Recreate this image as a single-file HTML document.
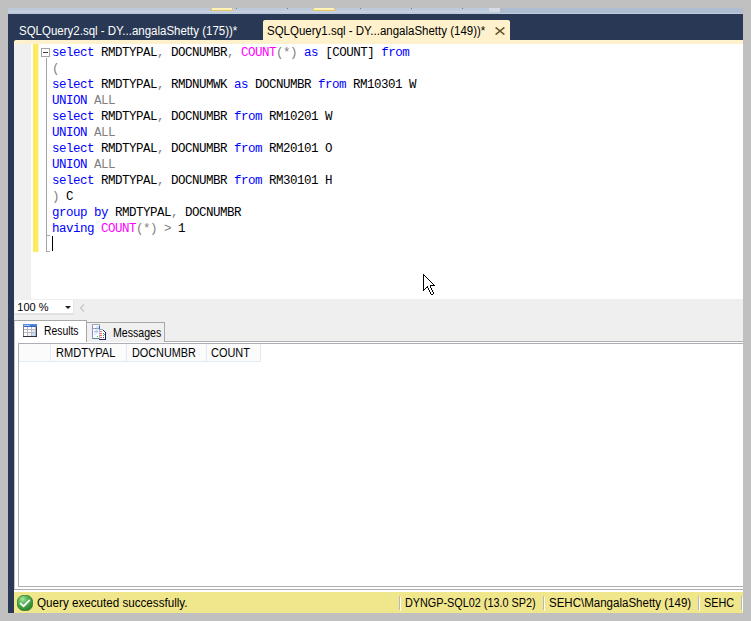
<!DOCTYPE html>
<html><head><meta charset="utf-8">
<style>
*{margin:0;padding:0;box-sizing:border-box}
html,body{width:751px;height:621px;overflow:hidden;background:#c0c0c0;position:relative}
.a{position:absolute}
.ui{position:absolute;font-family:"Liberation Sans",sans-serif;font-size:12px;line-height:14px;white-space:nowrap;transform-origin:0 0}
.cl{position:absolute;left:52px;margin-top:1px;height:16px;font-family:"Liberation Mono",monospace;font-size:12.5px;letter-spacing:-0.5px;line-height:16px;white-space:pre;color:#000}
.kw{color:#0000ff}.op{color:#808080}.fn{color:#ff00ff}
</style></head><body>
<!-- top light blue strip -->
<div class="a" style="left:8px;top:8px;width:735px;height:6px;background:#afbdd1"></div>
<div class="a" style="left:8px;top:13px;width:735px;height:1px;background:#bfcadb"></div>
<div class="a" style="left:8px;top:8px;width:492px;height:6px;background:#bccadb"></div>
<div class="a" style="left:8px;top:11px;width:492px;height:1px;background:#cad4e3"></div>
<div class="a" style="left:489px;top:8px;width:11px;height:4px;background:#d5dce8;border-radius:0 0 1px 3px"></div>
<div class="a" style="left:211px;top:8px;width:22px;height:3px;background:#fff3b6;border:1px solid #e5c365;border-top:0"></div>
<div class="a" style="left:313px;top:8px;width:22px;height:3px;background:#fff3b6;border:1px solid #e5c365;border-top:0"></div>
<div class="a" style="left:236px;top:8px;width:1px;height:1px;background:#707a88"></div>
<div class="a" style="left:287px;top:8px;width:1px;height:1px;background:#707a88"></div>
<div class="a" style="left:360px;top:8px;width:1px;height:1px;background:#707a88"></div>
<div class="a" style="left:411px;top:8px;width:1px;height:1px;background:#707a88"></div>
<div class="a" style="left:462px;top:8px;width:1px;height:1px;background:#707a88"></div>
<!-- navy frame -->
<div class="a" style="left:8px;top:14px;width:735px;height:599px;background:#293955"></div>
<!-- inactive tab text -->
<div class="ui" id="t_tab2" style="left:18.8px;top:24px;color:#fff;transform:scaleX(0.958)">SQLQuery2.sql - DY...angalaShetty (175))*</div>
<!-- active tab -->
<div class="a" style="left:263px;top:20px;width:247px;height:24px;background:#fef1cc;border-radius:2px 2px 0 0"></div>
<div class="ui" id="t_tab1" style="left:266.7px;top:24px;color:#000;transform:scaleX(0.958)">SQLQuery1.sql - DY...angalaShetty (149))*</div>
<svg class="a" style="left:495px;top:27px" width="10" height="8" viewBox="0 0 10 8"><path d="M0.6 0.4L9.4 7.6M9.4 0.4L0.6 7.6" stroke="#62522c" stroke-width="1.5"/></svg>
<!-- yellow strip -->
<div class="a" style="left:14px;top:40px;width:729px;height:4px;background:#fef1cc;border-radius:2px 0 0 0"></div>
<!-- editor -->
<div class="a" style="left:14px;top:44px;width:729px;height:255px;background:#fff"></div>
<div class="a" style="left:14px;top:44px;width:17px;height:255px;background:#f0f0f0"></div>
<div class="a" style="left:33px;top:44px;width:5px;height:208px;background:#feea62"></div>
<div class="a" style="left:38px;top:44px;width:1px;height:208px;background:#fff6b8"></div>
<!-- fold -->
<div class="a" style="left:41px;top:48px;width:9px;height:9px;border:1px solid #a5a5a5;background:#fff"></div>
<div class="a" style="left:43px;top:52px;width:5px;height:1px;background:#404040"></div>
<div class="a" style="left:46px;top:58px;width:1px;height:194px;background:#a5a5a5"></div>
<div class="a" style="left:46px;top:235px;width:4px;height:1px;background:#a5a5a5"></div>
<div class="a" style="left:46px;top:251px;width:4px;height:1px;background:#a5a5a5"></div>
<div class="a" style="left:52px;top:236px;width:1px;height:15px;background:#000"></div>
<div class="cl" id="t_c1" style="top:44px"><span class="kw">select</span> RMDTYPAL<span class="op">,</span> DOCNUMBR<span class="op">,</span><span class="fn"> COUNT</span><span class="op">(*)</span><span class="kw"> as</span> [COUNT]<span class="kw"> from</span></div>
<div class="cl" id="t_c2" style="top:60px"><span class="op">(</span></div>
<div class="cl" id="t_c3" style="top:76px"><span class="kw">select</span> RMDTYPAL<span class="op">,</span> RMDNUMWK<span class="kw"> as</span> DOCNUMBR<span class="kw"> from</span> RM10301 W</div>
<div class="cl" id="t_c4" style="top:92px"><span class="kw">UNION</span><span class="op"> ALL</span></div>
<div class="cl" id="t_c5" style="top:108px"><span class="kw">select</span> RMDTYPAL<span class="op">,</span> DOCNUMBR<span class="kw"> from</span> RM10201 W</div>
<div class="cl" id="t_c6" style="top:124px"><span class="kw">UNION</span><span class="op"> ALL</span></div>
<div class="cl" id="t_c7" style="top:140px"><span class="kw">select</span> RMDTYPAL<span class="op">,</span> DOCNUMBR<span class="kw"> from</span> RM20101 O</div>
<div class="cl" id="t_c8" style="top:156px"><span class="kw">UNION</span><span class="op"> ALL</span></div>
<div class="cl" id="t_c9" style="top:172px"><span class="kw">select</span> RMDTYPAL<span class="op">,</span> DOCNUMBR<span class="kw"> from</span> RM30101 H</div>
<div class="cl" id="t_c10" style="top:188px"><span class="op">)</span> C</div>
<div class="cl" id="t_c11" style="top:204px"><span class="kw">group by</span> RMDTYPAL<span class="op">,</span> DOCNUMBR</div>
<div class="cl" id="t_c12" style="top:220px"><span class="kw">having</span><span class="fn"> COUNT</span><span class="op">(*) &gt;</span> 1</div>
<!-- mouse cursor -->
<svg class="a" style="left:423px;top:274px" width="12" height="21" viewBox="0 0 12 21" shape-rendering="crispEdges"><path d="M1 2h1v1h-1zM1 3h1v1h-1zM2 3h1v1h-1zM1 4h1v1h-1zM2 4h1v1h-1zM3 4h1v1h-1zM1 5h1v1h-1zM2 5h1v1h-1zM3 5h1v1h-1zM4 5h1v1h-1zM1 6h1v1h-1zM2 6h1v1h-1zM3 6h1v1h-1zM4 6h1v1h-1zM5 6h1v1h-1zM1 7h1v1h-1zM2 7h1v1h-1zM3 7h1v1h-1zM4 7h1v1h-1zM5 7h1v1h-1zM6 7h1v1h-1zM1 8h1v1h-1zM2 8h1v1h-1zM3 8h1v1h-1zM4 8h1v1h-1zM5 8h1v1h-1zM6 8h1v1h-1zM7 8h1v1h-1zM1 9h1v1h-1zM2 9h1v1h-1zM3 9h1v1h-1zM4 9h1v1h-1zM5 9h1v1h-1zM6 9h1v1h-1zM7 9h1v1h-1zM8 9h1v1h-1zM1 10h1v1h-1zM2 10h1v1h-1zM3 10h1v1h-1zM4 10h1v1h-1zM5 10h1v1h-1zM6 10h1v1h-1zM7 10h1v1h-1zM8 10h1v1h-1zM9 10h1v1h-1zM1 11h1v1h-1zM2 11h1v1h-1zM3 11h1v1h-1zM4 11h1v1h-1zM5 11h1v1h-1zM6 11h1v1h-1zM1 12h1v1h-1zM2 12h1v1h-1zM3 12h1v1h-1zM5 12h1v1h-1zM6 12h1v1h-1zM1 13h1v1h-1zM2 13h1v1h-1zM5 13h1v1h-1zM6 13h1v1h-1zM1 14h1v1h-1zM6 14h1v1h-1zM7 14h1v1h-1zM6 15h1v1h-1zM7 15h1v1h-1zM7 16h1v1h-1zM8 16h1v1h-1zM7 17h1v1h-1zM8 17h1v1h-1zM8 18h1v1h-1zM9 18h1v1h-1zM8 19h1v1h-1zM9 19h1v1h-1z" fill="#fff"/><path d="M0 0h1v1h-1zM0 1h1v1h-1zM1 1h1v1h-1zM0 2h1v1h-1zM2 2h1v1h-1zM0 3h1v1h-1zM3 3h1v1h-1zM0 4h1v1h-1zM4 4h1v1h-1zM0 5h1v1h-1zM5 5h1v1h-1zM0 6h1v1h-1zM6 6h1v1h-1zM0 7h1v1h-1zM7 7h1v1h-1zM0 8h1v1h-1zM8 8h1v1h-1zM0 9h1v1h-1zM9 9h1v1h-1zM0 10h1v1h-1zM10 10h1v1h-1zM0 11h1v1h-1zM7 11h1v1h-1zM8 11h1v1h-1zM9 11h1v1h-1zM10 11h1v1h-1zM11 11h1v1h-1zM0 12h1v1h-1zM4 12h1v1h-1zM7 12h1v1h-1zM0 13h1v1h-1zM3 13h1v1h-1zM4 13h1v1h-1zM7 13h1v1h-1zM0 14h1v1h-1zM2 14h1v1h-1zM5 14h1v1h-1zM8 14h1v1h-1zM0 15h1v1h-1zM1 15h1v1h-1zM5 15h1v1h-1zM8 15h1v1h-1zM0 16h1v1h-1zM6 16h1v1h-1zM9 16h1v1h-1zM6 17h1v1h-1zM9 17h1v1h-1zM7 18h1v1h-1zM10 18h1v1h-1zM7 19h1v1h-1zM10 19h1v1h-1zM8 20h1v1h-1zM9 20h1v1h-1z" fill="#000"/></svg>
<!-- zoom bar / tab strip -->
<div class="a" style="left:14px;top:299px;width:729px;height:42px;background:#efefef"></div>
<div class="a" style="left:14px;top:313px;width:60px;height:2px;background:#e2e2e2"></div>
<div class="a" style="left:73px;top:300px;width:1px;height:13px;background:#e6e6e6"></div>
<div class="a" style="left:14px;top:300px;width:59px;height:13px;background:#fff;border-left:1px solid #f4f4f4"></div>
<div class="ui" id="t_zoom" style="left:17.3px;top:300px;color:#000;font-size:11px;transform:scaleX(1.0)">100 %</div>
<svg class="a" style="left:65px;top:306px" width="7" height="4"><path d="M0 0h6l-3 3z" fill="#1e1e1e"/></svg>
<svg class="a" style="left:79px;top:304px" width="7" height="8"><path d="M5 0.5L1.5 4L5 7.5" stroke="#c4c4c4" stroke-width="1.2" fill="none"/></svg>
<!-- results tabs -->
<div class="a" style="left:14px;top:341px;width:729px;height:251px;background:#fff;border-top:1px solid #b0b0b0"></div>
<div class="a" style="left:86px;top:322px;width:79px;height:20px;background:#f0f0f0;border:1px solid #a8a8a8;border-bottom:0"></div>
<div class="a" style="left:14px;top:320px;width:73px;height:22px;background:#fff;border:1px solid #a8a8a8;border-left:0;border-bottom:0"></div>
<div class="a" style="left:14px;top:321px;width:1px;height:269px;background:#c6c3bf"></div>
<svg class="a" style="left:23px;top:324px" width="14" height="13" viewBox="0 0 14 13" shape-rendering="crispEdges">
<rect x="0" y="0" width="14" height="13" fill="#808088"/>
<rect x="0" y="0" width="14" height="1" fill="#5a8ede"/>
<rect x="1" y="1" width="12" height="1" fill="#3f7ade"/><rect x="1" y="1" width="6" height="1" fill="#a6c6f4"/>
<rect x="1" y="2" width="12" height="1" fill="#3066cc"/>
<rect x="1" y="3" width="12" height="9" fill="#b9b9c2"/>
<rect x="1" y="3" width="3" height="2" fill="#fff"/><rect x="5" y="3" width="3" height="2" fill="#fff"/><rect x="9" y="3" width="3" height="2" fill="#fff"/>
<rect x="1" y="6" width="3" height="2" fill="#fff"/><rect x="5" y="6" width="3" height="2" fill="#fff"/><rect x="9" y="6" width="3" height="2" fill="#d8ecfc"/>
<rect x="1" y="9" width="3" height="3" fill="#fff"/><rect x="5" y="9" width="3" height="3" fill="#f0f0ff"/><rect x="9" y="9" width="3" height="3" fill="#c4dcf8"/>
<rect x="13" y="3" width="1" height="10" fill="#3c3c50"/><rect x="0" y="12" width="14" height="1" fill="#2e2e36"/>
</svg>
<div class="ui" id="t_results" style="left:43.7px;top:324px;color:#000;transform:scaleX(0.862)">Results</div>
<svg class="a" style="left:92px;top:324px" width="15" height="17" viewBox="0 0 15 17" shape-rendering="crispEdges"><rect x="0" y="0" width="1" height="1" fill="#a9a9b0"/><rect x="0" y="1" width="1" height="1" fill="#8e8ad6"/><rect x="0" y="2" width="1" height="1" fill="#8e8ad6"/><rect x="0" y="3" width="1" height="1" fill="#8e8ad6"/><rect x="0" y="4" width="1" height="1" fill="#8e8ad6"/><rect x="0" y="5" width="1" height="1" fill="#8e8ad6"/><rect x="0" y="6" width="1" height="1" fill="#8e8ad6"/><rect x="0" y="7" width="1" height="1" fill="#8e8ad6"/><rect x="0" y="8" width="1" height="1" fill="#8e8ad6"/><rect x="0" y="9" width="1" height="1" fill="#8e8ad6"/><rect x="0" y="10" width="1" height="1" fill="#8e8ad6"/><rect x="0" y="11" width="1" height="1" fill="#8e8ad6"/><rect x="0" y="12" width="1" height="1" fill="#8e8ad6"/><rect x="0" y="13" width="1" height="1" fill="#8e8ad6"/><rect x="0" y="14" width="1" height="1" fill="#8e8ad6"/><rect x="1" y="0" width="1" height="1" fill="#a9a9b0"/><rect x="1" y="1" width="1" height="1" fill="#fbfdff"/><rect x="1" y="2" width="1" height="1" fill="#fbfdff"/><rect x="1" y="3" width="1" height="1" fill="#fbfdff"/><rect x="1" y="4" width="1" height="1" fill="#6ab8b0"/><rect x="1" y="5" width="1" height="1" fill="#fbfdff"/><rect x="1" y="6" width="1" height="1" fill="#fbfdff"/><rect x="1" y="7" width="1" height="1" fill="#fbfdff"/><rect x="1" y="8" width="1" height="1" fill="#fbfdff"/><rect x="1" y="9" width="1" height="1" fill="#fbfdff"/><rect x="1" y="10" width="1" height="1" fill="#fbfdff"/><rect x="1" y="11" width="1" height="1" fill="#fbfdff"/><rect x="1" y="12" width="1" height="1" fill="#fbfdff"/><rect x="1" y="13" width="1" height="1" fill="#fbfdff"/><rect x="1" y="14" width="1" height="1" fill="#4f8c8c"/><rect x="2" y="0" width="1" height="1" fill="#a9a9b0"/><rect x="2" y="1" width="1" height="1" fill="#fbfdff"/><rect x="2" y="2" width="1" height="1" fill="#fbfdff"/><rect x="2" y="3" width="1" height="1" fill="#fbfdff"/><rect x="2" y="4" width="1" height="1" fill="#a8a8a8"/><rect x="2" y="5" width="1" height="1" fill="#fbfdff"/><rect x="2" y="6" width="1" height="1" fill="#fbfdff"/><rect x="2" y="7" width="1" height="1" fill="#b4b4b4"/><rect x="2" y="8" width="1" height="1" fill="#fbfdff"/><rect x="2" y="9" width="1" height="1" fill="#fbfdff"/><rect x="2" y="10" width="1" height="1" fill="#c9e8fb"/><rect x="2" y="11" width="1" height="1" fill="#fbfdff"/><rect x="2" y="12" width="1" height="1" fill="#fbfdff"/><rect x="2" y="13" width="1" height="1" fill="#fbfdff"/><rect x="2" y="14" width="1" height="1" fill="#4f8c8c"/><rect x="3" y="0" width="1" height="1" fill="#a9a9b0"/><rect x="3" y="1" width="1" height="1" fill="#fbfdff"/><rect x="3" y="2" width="1" height="1" fill="#fbfdff"/><rect x="3" y="3" width="1" height="1" fill="#fbfdff"/><rect x="3" y="4" width="1" height="1" fill="#8a84d8"/><rect x="3" y="5" width="1" height="1" fill="#c9e8fb"/><rect x="3" y="6" width="1" height="1" fill="#fbfdff"/><rect x="3" y="7" width="1" height="1" fill="#b4b4b4"/><rect x="3" y="8" width="1" height="1" fill="#c9e8fb"/><rect x="3" y="9" width="1" height="1" fill="#fbfdff"/><rect x="3" y="10" width="1" height="1" fill="#c9e8fb"/><rect x="3" y="11" width="1" height="1" fill="#fbfdff"/><rect x="3" y="12" width="1" height="1" fill="#fbfdff"/><rect x="3" y="13" width="1" height="1" fill="#fbfdff"/><rect x="3" y="14" width="1" height="1" fill="#4f8c8c"/><rect x="4" y="0" width="1" height="1" fill="#a9a9b0"/><rect x="4" y="1" width="1" height="1" fill="#fbfdff"/><rect x="4" y="2" width="1" height="1" fill="#c9e8fb"/><rect x="4" y="3" width="1" height="1" fill="#c9e8fb"/><rect x="4" y="4" width="1" height="1" fill="#a8a8a8"/><rect x="4" y="5" width="1" height="1" fill="#c9e8fb"/><rect x="4" y="6" width="1" height="1" fill="#c9e8fb"/><rect x="4" y="7" width="1" height="1" fill="#b4b4b4"/><rect x="4" y="8" width="1" height="1" fill="#c9e8fb"/><rect x="4" y="9" width="1" height="1" fill="#c9e8fb"/><rect x="4" y="10" width="1" height="1" fill="#fbfdff"/><rect x="4" y="11" width="1" height="1" fill="#fbfdff"/><rect x="4" y="12" width="1" height="1" fill="#fbfdff"/><rect x="4" y="13" width="1" height="1" fill="#fbfdff"/><rect x="4" y="14" width="1" height="1" fill="#4f8c8c"/><rect x="5" y="0" width="1" height="1" fill="#a9a9b0"/><rect x="5" y="1" width="1" height="1" fill="#fbfdff"/><rect x="5" y="2" width="1" height="1" fill="#c9e8fb"/><rect x="5" y="3" width="1" height="1" fill="#c9e8fb"/><rect x="5" y="4" width="1" height="1" fill="#a8a8a8"/><rect x="5" y="5" width="1" height="1" fill="#c9e8fb"/><rect x="5" y="6" width="1" height="1" fill="#c9e8fb"/><rect x="5" y="7" width="1" height="1" fill="#b4b4b4"/><rect x="5" y="8" width="1" height="1" fill="#c9e8fb"/><rect x="5" y="9" width="1" height="1" fill="#fbfdff"/><rect x="5" y="10" width="1" height="1" fill="#fbfdff"/><rect x="5" y="11" width="1" height="1" fill="#fbfdff"/><rect x="5" y="12" width="1" height="1" fill="#3ab83a"/><rect x="5" y="13" width="1" height="1" fill="#fbfdff"/><rect x="5" y="14" width="1" height="1" fill="#4f8c8c"/><rect x="6" y="0" width="1" height="1" fill="#a9a9b0"/><rect x="6" y="1" width="1" height="1" fill="#fbfdff"/><rect x="6" y="2" width="1" height="1" fill="#c9e8fb"/><rect x="6" y="3" width="1" height="1" fill="#c9e8fb"/><rect x="6" y="4" width="1" height="1" fill="#a8a8a8"/><rect x="6" y="5" width="1" height="1" fill="#c9e8fb"/><rect x="6" y="6" width="1" height="1" fill="#fbfdff"/><rect x="6" y="7" width="1" height="1" fill="#fbfdff"/><rect x="6" y="8" width="1" height="1" fill="#fbfdff"/><rect x="6" y="9" width="1" height="1" fill="#fbfdff"/><rect x="6" y="10" width="1" height="1" fill="#fbfdff"/><rect x="6" y="11" width="1" height="1" fill="#fbfdff"/><rect x="6" y="12" width="1" height="1" fill="#fbfdff"/><rect x="6" y="13" width="1" height="1" fill="#fbfdff"/><rect x="6" y="14" width="1" height="1" fill="#4f8c8c"/><rect x="7" y="0" width="1" height="1" fill="#a9a9b0"/><rect x="7" y="1" width="1" height="1" fill="#5fa8a0"/><rect x="7" y="2" width="1" height="1" fill="#6a70b8"/><rect x="7" y="3" width="1" height="1" fill="#5a50a0"/><rect x="7" y="4" width="1" height="1" fill="#5a50a0"/><rect x="7" y="5" width="1" height="1" fill="#70b4c8"/><rect x="7" y="6" width="1" height="1" fill="#b8b4e8"/><rect x="7" y="7" width="1" height="1" fill="#b8b4e8"/><rect x="7" y="8" width="1" height="1" fill="#b8b4e8"/><rect x="7" y="9" width="1" height="1" fill="#b8b4e8"/><rect x="7" y="10" width="1" height="1" fill="#b8b4e8"/><rect x="7" y="11" width="1" height="1" fill="#b8b4e8"/><rect x="7" y="12" width="1" height="1" fill="#b8b4e8"/><rect x="7" y="13" width="1" height="1" fill="#b8b4e8"/><rect x="7" y="14" width="1" height="1" fill="#b8b4e8"/><rect x="7" y="15" width="1" height="1" fill="#22226a"/><rect x="8" y="5" width="1" height="1" fill="#70b4c8"/><rect x="8" y="6" width="1" height="1" fill="#ffffff"/><rect x="8" y="7" width="1" height="1" fill="#ff6a6a"/><rect x="8" y="8" width="1" height="1" fill="#ffffff"/><rect x="8" y="9" width="1" height="1" fill="#ff7a40"/><rect x="8" y="10" width="1" height="1" fill="#ffffff"/><rect x="8" y="11" width="1" height="1" fill="#ff5555"/><rect x="8" y="12" width="1" height="1" fill="#ffffff"/><rect x="8" y="13" width="1" height="1" fill="#ff6a30"/><rect x="8" y="14" width="1" height="1" fill="#ffffff"/><rect x="8" y="15" width="1" height="1" fill="#22226a"/><rect x="9" y="5" width="1" height="1" fill="#70b4c8"/><rect x="9" y="6" width="1" height="1" fill="#ffffff"/><rect x="9" y="7" width="1" height="1" fill="#ff6a6a"/><rect x="9" y="8" width="1" height="1" fill="#ffffff"/><rect x="9" y="9" width="1" height="1" fill="#ff7a40"/><rect x="9" y="10" width="1" height="1" fill="#ffffff"/><rect x="9" y="11" width="1" height="1" fill="#ff5555"/><rect x="9" y="12" width="1" height="1" fill="#ffffff"/><rect x="9" y="13" width="1" height="1" fill="#ff6a30"/><rect x="9" y="14" width="1" height="1" fill="#ffffff"/><rect x="9" y="15" width="1" height="1" fill="#22226a"/><rect x="10" y="5" width="1" height="1" fill="#70b4c8"/><rect x="10" y="6" width="1" height="1" fill="#ffffff"/><rect x="10" y="7" width="1" height="1" fill="#ffffff"/><rect x="10" y="8" width="1" height="1" fill="#ffffff"/><rect x="10" y="9" width="1" height="1" fill="#ffffff"/><rect x="10" y="10" width="1" height="1" fill="#ffffff"/><rect x="10" y="11" width="1" height="1" fill="#ffffff"/><rect x="10" y="12" width="1" height="1" fill="#ffffff"/><rect x="10" y="13" width="1" height="1" fill="#ffffff"/><rect x="10" y="14" width="1" height="1" fill="#ffffff"/><rect x="10" y="15" width="1" height="1" fill="#22226a"/><rect x="11" y="5" width="1" height="1" fill="#efefef"/><rect x="11" y="6" width="1" height="1" fill="#202060"/><rect x="11" y="7" width="1" height="1" fill="#ffffff"/><rect x="11" y="8" width="1" height="1" fill="#ffffff"/><rect x="11" y="9" width="1" height="1" fill="#3aa03a"/><rect x="11" y="10" width="1" height="1" fill="#ffffff"/><rect x="11" y="11" width="1" height="1" fill="#4aa04a"/><rect x="11" y="12" width="1" height="1" fill="#ffffff"/><rect x="11" y="13" width="1" height="1" fill="#2a6a3a"/><rect x="11" y="14" width="1" height="1" fill="#ffffff"/><rect x="11" y="15" width="1" height="1" fill="#22226a"/><rect x="12" y="5" width="1" height="1" fill="#efefef"/><rect x="12" y="6" width="1" height="1" fill="#efefef"/><rect x="12" y="7" width="1" height="1" fill="#202060"/><rect x="12" y="8" width="1" height="1" fill="#ffffff"/><rect x="12" y="9" width="1" height="1" fill="#ffffff"/><rect x="12" y="10" width="1" height="1" fill="#8080c0"/><rect x="12" y="11" width="1" height="1" fill="#ffffff"/><rect x="12" y="12" width="1" height="1" fill="#ffffff"/><rect x="12" y="13" width="1" height="1" fill="#ffffff"/><rect x="12" y="14" width="1" height="1" fill="#ffffff"/><rect x="12" y="15" width="1" height="1" fill="#22226a"/><rect x="13" y="5" width="1" height="1" fill="#efefef"/><rect x="13" y="6" width="1" height="1" fill="#efefef"/><rect x="13" y="7" width="1" height="1" fill="#efefef"/><rect x="13" y="8" width="1" height="1" fill="#22226a"/><rect x="13" y="9" width="1" height="1" fill="#22226a"/><rect x="13" y="10" width="1" height="1" fill="#22226a"/><rect x="13" y="11" width="1" height="1" fill="#22226a"/><rect x="13" y="12" width="1" height="1" fill="#22226a"/><rect x="13" y="13" width="1" height="1" fill="#22226a"/><rect x="13" y="14" width="1" height="1" fill="#22226a"/><rect x="13" y="15" width="1" height="1" fill="#22226a"/></svg>
<div class="ui" id="t_messages" style="left:112.8px;top:326px;color:#000;transform:scaleX(0.883)">Messages</div>
<!-- results panel -->

<div class="a" style="left:14px;top:589px;width:729px;height:1px;background:#adadad"></div>
<div class="a" style="left:18px;top:343px;width:725px;height:244px;border:1px solid #adafb6;border-right:0"></div>
<div class="a" style="left:19px;top:344px;width:242px;height:18px;background:#fbfbfb;border-bottom:1px solid #e2ebf5;border-right:1px solid #e2ebf5"></div>
<div class="a" style="left:50px;top:344px;width:1px;height:18px;background:#e2ebf5"></div>
<div class="a" style="left:126px;top:344px;width:1px;height:18px;background:#e2ebf5"></div>
<div class="a" style="left:206px;top:344px;width:1px;height:18px;background:#e2ebf5"></div>
<div class="ui" id="t_h1" style="left:55.5px;top:346px;color:#000;transform:scaleX(0.921)">RMDTYPAL</div>
<div class="ui" id="t_h2" style="left:131.5px;top:346px;color:#000;transform:scaleX(0.904)">DOCNUMBR</div>
<div class="ui" id="t_h3" style="left:211px;top:346px;color:#000;transform:scaleX(0.912)">COUNT</div>
<!-- status bar -->
<div class="a" style="left:14px;top:592px;width:729px;height:21px;background:#f0e68c"></div>
<svg class="a" style="left:17px;top:595px" width="16" height="16" viewBox="0 0 16 16">
<defs><radialGradient id="g" cx="0.35" cy="0.25" r="0.8"><stop offset="0" stop-color="#a8e8a0"/><stop offset="0.35" stop-color="#5cb85a"/><stop offset="0.8" stop-color="#3a923a"/><stop offset="1" stop-color="#2c7c2c"/></radialGradient></defs>
<path d="M8 0.3C13 0.3 15.7 3 15.7 8S13 15.7 8 15.7 0.3 13 0.3 8 3 0.3 8 0.3z" fill="url(#g)" stroke="#2a7a2a" stroke-width="0.8"/>
<path d="M3.8 8.6L6.6 11.2L12.2 5.4" stroke="#fff" stroke-width="1.8" fill="none" stroke-linecap="square"/>
</svg>
<div class="ui" id="t_status" style="left:37.1px;top:595.7px;color:#000;transform:scaleX(0.970)">Query executed successfully.</div>
<div class="a" style="left:399px;top:596px;width:1px;height:14px;background:#b6b6c4"></div>
<div class="a" style="left:400px;top:597px;width:1px;height:14px;background:#ffffff"></div>
<div class="ui" id="t_s1" style="left:404.9px;top:595.7px;color:#000;transform:scaleX(0.902)">DYNGP-SQL02 (13.0 SP2)</div>
<div class="a" style="left:543px;top:596px;width:1px;height:14px;background:#b6b6c4"></div>
<div class="a" style="left:544px;top:597px;width:1px;height:14px;background:#ffffff"></div>
<div class="ui" id="t_s2" style="left:549px;top:595.7px;color:#000;transform:scaleX(0.96)">SEHC\MangalaShetty (149)</div>
<div class="a" style="left:698px;top:596px;width:1px;height:14px;background:#b6b6c4"></div>
<div class="a" style="left:699px;top:597px;width:1px;height:14px;background:#ffffff"></div>
<div class="ui" id="t_s3" style="left:703.5px;top:595.7px;color:#000;transform:scaleX(0.903)">SEHC</div>
<div class="a" style="left:741px;top:596px;width:1px;height:14px;background:#b6b6c4"></div>
<div class="a" style="left:742px;top:597px;width:1px;height:14px;background:#ffffff"></div>
</body></html>
